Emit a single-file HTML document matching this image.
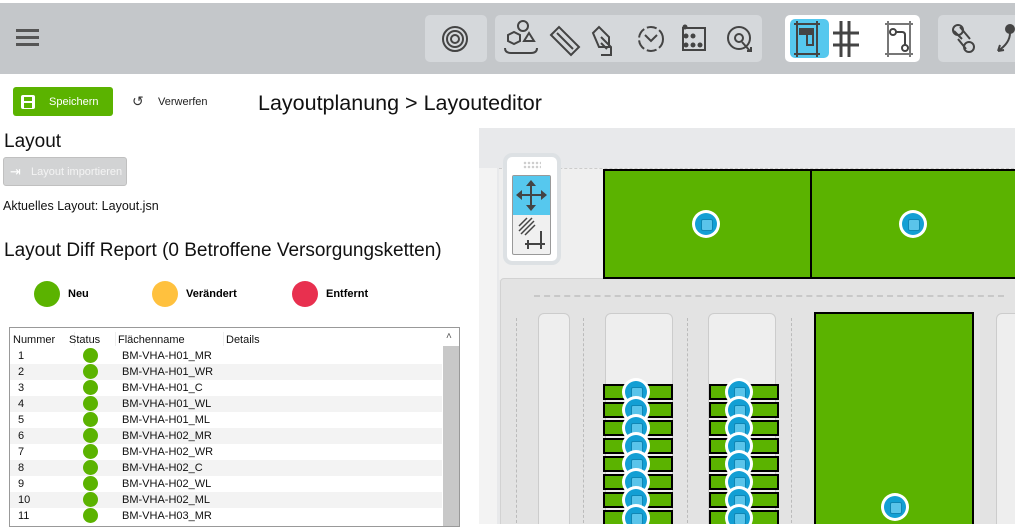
<!DOCTYPE html>
<html><head><meta charset="utf-8"><style>
*{box-sizing:border-box;margin:0;padding:0}
body{width:1015px;height:524px;overflow:hidden;background:#fff;font-family:"Liberation Sans","DejaVu Sans",sans-serif;position:relative}
.a{position:absolute}
.grp{position:absolute;top:15px;height:47px;background:#d5d8db;border-radius:5px}
.ic{position:absolute;top:0}
table{border-collapse:collapse;font-size:11px;color:#111}
td{height:16px;padding:0;line-height:16px;vertical-align:top}
.dot{display:block;width:15px;height:15px;border-radius:50%;background:#5bb300;margin-top:0}
.g{background:#5bb300;border:2px solid #000;position:absolute}
.bd{position:absolute;width:28px;height:28px;border-radius:50%;background:#fff}
.bd::before{content:"";position:absolute;left:3px;top:3px;width:22px;height:22px;border-radius:50%;background:#139fd4}
.bd::after{content:"";position:absolute;left:9px;top:9px;width:10px;height:10px;border-radius:2px;background:#5ac4ea;border:1px solid #0f86b5}
</style></head><body>
<div class="a" style="left:0;top:3px;width:1015px;height:71px;background:#c4c7ca"></div>
<div class="a" style="left:16px;top:29px;width:23px;height:3px;background:#555;box-shadow:0 7px 0 #555,0 14px 0 #555"></div>
<div class="grp" style="left:425px;width:62px"><svg class="ic" width="62" height="47"><g fill="none" stroke="#444" stroke-width="2"><circle cx="30" cy="24" r="12"/><circle cx="30" cy="24" r="8"/><circle cx="30" cy="24" r="4"/></g></svg></div>
<div class="grp" style="left:495px;width:267px"><svg class="ic" width="267" height="47" fill="none" stroke="#444" stroke-width="2">
<path d="M10 33 q0 5 6 5 h20 q6 0 6-5"/><circle cx="28" cy="11" r="5"/><path d="M13 20 l6-3 6 3 v6 l-6 3-6-3z M29 26 l5-8 5 8z"/>
<path d="M56 20 l8-8 20 20-8 8z M62 18 l16 16"/>
<path d="M98 18 l6-6 10 10 v10 h-10z M106 28 l6 6 M106 22 l10 10 v8 h-10"/>
<circle cx="156" cy="24" r="12" stroke-dasharray="10 3"/><path d="M150 20 l6 6 6-6"/>
<rect x="188" y="13" width="22" height="22"/><g fill="#444" stroke="none"><circle cx="190" cy="12" r="2.5"/><circle cx="191" cy="21" r="2.5"/><circle cx="198" cy="21" r="2.5"/><circle cx="191" cy="30" r="2.5"/><circle cx="198" cy="30" r="2.5"/><circle cx="205" cy="30" r="2.5"/></g>
<circle cx="244" cy="23" r="11"/><circle cx="244" cy="23" r="4"/><path d="M247 27 l8 9 M252 36 h4 v-4"/></svg></div>
<div class="a" style="left:785px;top:15px;width:135px;height:47px;background:#fff;border-radius:5px"></div>
<div class="a" style="left:790px;top:19px;width:39px;height:39px;background:#56c8ee;border-radius:5px"></div>
<svg class="a" style="left:785px;top:15px" width="135" height="47" fill="none" stroke="#444" stroke-width="2">
<path d="M9 9 h26 M9 39 h26 M12 6 v36 M32 6 v36"/><rect x="15" y="14" width="13" height="5" fill="#444"/><rect x="22" y="18" width="6" height="12"/>
<path d="M56 6 v36 M64 6 v36 M48 18 h26 M48 30 h26" stroke-width="3"/>
<path d="M100 9 h28 M100 39 h28 M103 6 v36 M125 6 v36" stroke="#777"/><circle cx="108" cy="17" r="3" fill="#fff"/><circle cx="120" cy="33" r="3" fill="#fff"/><path d="M111 17 h6 q3 0 3 3 v10"/></svg>
<div class="grp" style="left:938px;width:90px"><svg class="ic" width="90" height="47" fill="none" stroke="#444" stroke-width="2"><path d="M16 16 l8 8 M22 12 l10 12 M20 24 l8 10"/><circle cx="20" cy="15" r="5"/><circle cx="31" cy="32" r="5"/><circle cx="72" cy="14" r="4" fill="#444"/><path d="M72 18 q0 10-12 18 M60 36 l2-6 M60 36 l6-1"/></svg></div>

<div class="a" style="left:13px;top:87px;width:100px;height:29px;background:#5bb300;border-radius:3px"></div>
<svg class="a" style="left:20px;top:94px" width="16" height="16"><rect x="1" y="1" width="14" height="14" rx="2" fill="#fff"/><rect x="4" y="3" width="8" height="4" fill="#5bb300"/><rect x="4" y="9" width="8" height="5" fill="#5bb300"/></svg>
<div class="a" style="left:49px;top:96px;font-size:11px;color:#fff">Speichern</div>
<div class="a" style="left:132px;top:93px;font-size:14px;color:#333">↺</div>
<div class="a" style="left:158px;top:96px;font-size:11px;color:#222">Verwerfen</div>
<div class="a" style="left:258px;top:91px;font-size:21.5px;color:#111">Layoutplanung &gt; Layouteditor</div>

<div class="a" style="left:4px;top:131px;font-size:19px;color:#111">Layout</div>
<div class="a" style="left:3px;top:157px;width:124px;height:29px;background:#d2d3d4;border:1px solid #c0c0c0;border-radius:3px"></div>
<div class="a" style="left:10px;top:164px;font-size:13px;color:#fff">⇥</div>
<div class="a" style="left:31px;top:166px;font-size:11px;color:#f4f4f4">Layout importieren</div>
<div class="a" style="left:3px;top:199px;font-size:12.5px;color:#111">Aktuelles Layout: Layout.jsn</div>
<div class="a" style="left:4px;top:240px;font-size:19px;color:#111">Layout Diff Report (0 Betroffene Versorgungsketten)</div>
<div class="a" style="left:34px;top:281px;width:26px;height:26px;border-radius:50%;background:#5bb300"></div>
<div class="a" style="left:68px;top:288px;font-size:11px;font-weight:bold">Neu</div>
<div class="a" style="left:152px;top:281px;width:26px;height:26px;border-radius:50%;background:#ffc13e"></div>
<div class="a" style="left:186px;top:288px;font-size:11px;font-weight:bold">Verändert</div>
<div class="a" style="left:292px;top:281px;width:26px;height:26px;border-radius:50%;background:#e8304f"></div>
<div class="a" style="left:326px;top:288px;font-size:11px;font-weight:bold">Entfernt</div>

<div class="a" style="left:9px;top:327px;width:451px;height:200px;border:1px solid #999;background:#fff;overflow:hidden">
<div class="a" style="left:433px;top:18px;width:17px;height:190px;background:#c8c8c8"></div>
<div class="a" style="left:436px;top:3px;font-size:10px;color:#555">˄</div>
<div class="a" style="left:64px;top:4px;width:1px;height:14px;background:#eee"></div>
<div class="a" style="left:105px;top:4px;width:1px;height:14px;background:#eee"></div>
<div class="a" style="left:213px;top:4px;width:1px;height:14px;background:#eee"></div>
<table class="a" style="left:0;top:4px;width:432px">
<tr><td style="width:55px;padding-left:3px">Nummer</td><td style="width:49px;padding-left:4px">Status</td><td style="width:108px;padding-left:4px">Flächenname</td><td style="padding-left:4px">Details</td></tr>
<tr><td style="padding-left:8px">1</td><td style="padding-left:18px"><span class="dot"></span></td><td style="padding-left:8px">BM-VHA-H01_MR</td><td></td></tr>
<tr style="background:#f3f3f3"><td style="padding-left:8px">2</td><td style="padding-left:18px"><span class="dot"></span></td><td style="padding-left:8px">BM-VHA-H01_WR</td><td></td></tr>
<tr><td style="padding-left:8px">3</td><td style="padding-left:18px"><span class="dot"></span></td><td style="padding-left:8px">BM-VHA-H01_C</td><td></td></tr>
<tr style="background:#f3f3f3"><td style="padding-left:8px">4</td><td style="padding-left:18px"><span class="dot"></span></td><td style="padding-left:8px">BM-VHA-H01_WL</td><td></td></tr>
<tr><td style="padding-left:8px">5</td><td style="padding-left:18px"><span class="dot"></span></td><td style="padding-left:8px">BM-VHA-H01_ML</td><td></td></tr>
<tr style="background:#f3f3f3"><td style="padding-left:8px">6</td><td style="padding-left:18px"><span class="dot"></span></td><td style="padding-left:8px">BM-VHA-H02_MR</td><td></td></tr>
<tr><td style="padding-left:8px">7</td><td style="padding-left:18px"><span class="dot"></span></td><td style="padding-left:8px">BM-VHA-H02_WR</td><td></td></tr>
<tr style="background:#f3f3f3"><td style="padding-left:8px">8</td><td style="padding-left:18px"><span class="dot"></span></td><td style="padding-left:8px">BM-VHA-H02_C</td><td></td></tr>
<tr><td style="padding-left:8px">9</td><td style="padding-left:18px"><span class="dot"></span></td><td style="padding-left:8px">BM-VHA-H02_WL</td><td></td></tr>
<tr style="background:#f3f3f3"><td style="padding-left:8px">10</td><td style="padding-left:18px"><span class="dot"></span></td><td style="padding-left:8px">BM-VHA-H02_ML</td><td></td></tr>
<tr><td style="padding-left:8px">11</td><td style="padding-left:18px"><span class="dot"></span></td><td style="padding-left:8px">BM-VHA-H03_MR</td><td></td></tr>
</table></div>

<div class="a" style="left:479px;top:128px;width:536px;height:396px;background:#e8e9eb;overflow:hidden">
<div class="a" style="left:0;top:40px;width:18px;height:360px;background:#f3f3f3"></div>
<div class="a" style="left:20px;top:40px;width:520px;height:112px;background:#efefef;border-top:1px dashed #ccc"></div>
<div class="a" style="left:21px;top:150px;width:520px;height:250px;background:#e3e3e3;border:1px solid #d2d2d2;border-radius:4px"></div>
<div class="a" style="left:55px;top:167px;width:470px;height:0;border-top:2px dashed #c8c8c8"></div>
<div class="a" style="left:59px;top:185px;width:32px;height:220px;background:#eeeeee;border:1px solid #ccc;border-radius:6px 6px 0 0"></div>
<div class="a" style="left:126px;top:185px;width:68px;height:220px;background:#eeeeee;border:1px solid #ccc;border-radius:6px 6px 0 0"></div>
<div class="a" style="left:229px;top:185px;width:68px;height:220px;background:#eeeeee;border:1px solid #ccc;border-radius:6px 6px 0 0"></div>
<div class="a" style="left:517px;top:185px;width:30px;height:220px;background:#eeeeee;border:1px solid #ccc;border-radius:6px 6px 0 0"></div>
<div class="a" style="left:37px;top:190px;height:210px;border-left:1px dashed #bbb"></div>
<div class="a" style="left:104px;top:190px;height:210px;border-left:1px dashed #bbb"></div>
<div class="a" style="left:208px;top:190px;height:210px;border-left:1px dashed #bbb"></div>
<div class="a" style="left:312px;top:190px;height:210px;border-left:1px dashed #bbb"></div>
<div class="g" style="left:124px;top:41px;width:209px;height:110px"></div>
<div class="g" style="left:331px;top:41px;width:210px;height:110px"></div>
<div class="g" style="left:335px;top:184px;width:160px;height:220px"></div>
<div id="racks"></div>
<div class="bd" style="left:213px;top:82px"></div>
<div class="bd" style="left:420px;top:82px"></div>
<div class="bd" style="left:402px;top:365px"></div>
<div class="a" style="left:24px;top:25px;width:58px;height:112px;background:#fff;border:4px solid #dde1e4;border-radius:9px"></div>
<div class="a" style="left:44px;top:33px;width:18px;height:8px;background:radial-gradient(circle,#ccc 1px,transparent 1.5px) 0 0/4px 4px"></div>
<div class="a" style="left:33px;top:47px;width:39px;height:80px;border:1px solid #999;border-radius:2px;background:#f0f0f0"></div>
<div class="a" style="left:34px;top:48px;width:37px;height:39px;background:#56c8ee"></div>
<svg class="a" style="left:34px;top:48px" width="37" height="80" fill="#444" stroke="#444"><path d="M18 4 l5 6 h-10z M18 35 l5-6 h-10z M3 19 l6-5 v10z M34 19 l-6-5 v10z" stroke="none"/><path d="M18 10 v19 M9 19 h19" stroke-width="2"/><path d="M6 50 l8-8 M6 55 l13-13 M8 58 l13-13 M12 59 l10-10" stroke-width="1.5"/><path d="M28 55 v18 M12 68 h20 M15 64 v9" stroke-width="2"/></svg>
</div>
<script>
var h='';for(var i=0;i<8;i++){var t=256+i*18;h+='<div class="g" style="left:124px;top:'+t+'px;width:70px;height:16px"></div><div class="g" style="left:230px;top:'+t+'px;width:70px;height:16px"></div>';}
for(var i=0;i<8;i++){var t=250+i*18;h+='<div class="bd" style="left:143px;top:'+t+'px"></div><div class="bd" style="left:246px;top:'+t+'px"></div>';}
document.getElementById('racks').innerHTML=h;
</script>
</body></html>
